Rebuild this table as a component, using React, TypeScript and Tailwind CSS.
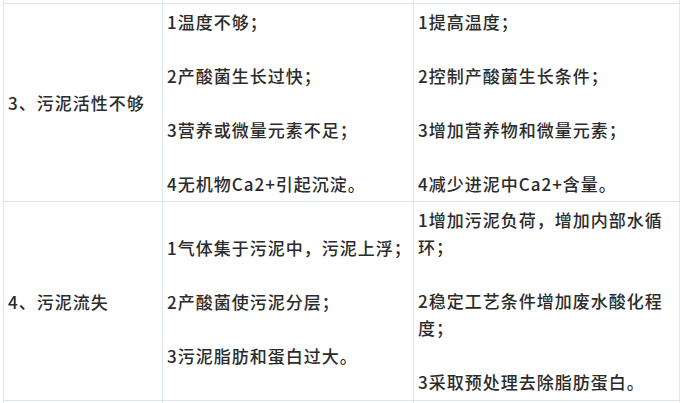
import React from "react";

const B = "border-[#dde6ef]";

function Cell({ children, className = "" }: { children?: React.ReactNode; className?: string }) {
  return <div className={`border-l border-t ${B} ${className}`}>{children}</div>;
}

function Lines({ items }: { items: string[] }) {
  return (
    <div className="flex flex-col">
      {items.map((t, i) => (
        <React.Fragment key={i}>
          {i > 0 && <div className="h-[27px]" />}
          <p>{t}</p>
        </React.Fragment>
      ))}
    </div>
  );
}

export default function App() {
  return (
    <div
      className="w-[683px] h-[403px] overflow-hidden bg-white text-[#2b2b2b] text-[17px] leading-[27px] tracking-[1px] font-medium"
      style={{ fontFamily: '"Noto Sans CJK SC", "Noto Sans", sans-serif' }}
    >
      <div className={`ml-[3px] w-[677px] grid grid-cols-[159px_251px_266px] border-r ${B}`}>
        {/* partial previous row */}
        <div className={`h-[3px] border-l ${B}`} />
        <div className={`h-[3px] border-l ${B}`} />
        <div className={`h-[3px] border-l ${B}`} />

        {/* row 1 */}
        <Cell className="h-[198px] flex items-center pl-[4px]">3、污泥活性不够</Cell>
        <Cell className="h-[198px] pl-[4px] pt-[4px]">
          <Lines items={["1温度不够；", "2产酸菌生长过快；", "3营养或微量元素不足；", "4无机物Ca2+引起沉淀。"]} />
        </Cell>
        <Cell className="h-[198px] pl-[4px] pt-[4px]">
          <Lines items={["1提高温度；", "2控制产酸菌生长条件；", "3增加营养物和微量元素；", "4减少进泥中Ca2+含量。"]} />
        </Cell>

        {/* row 2 */}
        <Cell className="h-[199px] flex items-center pl-[4px]">4、污泥流失</Cell>
        <Cell className="h-[199px] flex items-center pl-[4px]">
          <Lines items={["1气体集于污泥中，污泥上浮；", "2产酸菌使污泥分层；", "3污泥脂肪和蛋白过大。"]} />
        </Cell>
        <Cell className="h-[199px] pl-[4px] pr-[4px] pt-[4px]">
          <Lines items={["1增加污泥负荷，增加内部水循环；", "2稳定工艺条件增加废水酸化程度；", "3采取预处理去除脂肪蛋白。"]} />
        </Cell>

        {/* partial next row */}
        <Cell className="h-[4px]" />
        <Cell className="h-[4px]" />
        <Cell className="h-[4px]" />
      </div>
    </div>
  );
}
